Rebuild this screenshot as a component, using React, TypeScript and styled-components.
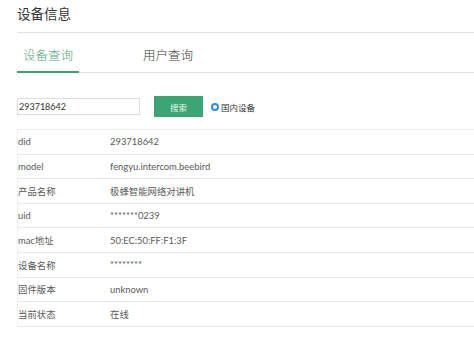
import styled, { createGlobalStyle } from 'styled-components'

const GlobalStyle = createGlobalStyle`
  html, body {
    margin: 0;
    padding: 0;
    background: #fff;
    overflow: hidden;
  }
  * { box-sizing: border-box; }
`

const Page = styled.div`
  padding-left: 17px;
  width: 100%;
  font-family: Lato, "Noto Sans CJK SC", sans-serif;
  color: #555;
`

const Header = styled.div`
  height: 33px;
  display: flex;
  align-items: center;
  padding-bottom: 6px;
  border-bottom: 1px solid #e3e3e3;
`

const Title = styled.h1`
  margin: 0;
  font-size: 13.5px;
  font-weight: 400;
  color: #333;
  font-family: "Noto Sans CJK SC", sans-serif;
`

const TabBar = styled.div`
  display: flex;
  height: 40px;
  gap: 58px;
  border-bottom: 1px solid #e3e3e3;
`

const Tab = styled.div<{ $active?: boolean }>`
  width: 62px;
  display: flex;
  align-items: center;
  justify-content: center;
  padding-top: 5px;
  font-size: 12.5px;
  font-weight: 300;
  font-family: "Noto Sans CJK SC", sans-serif;
  color: ${({ $active }) => ($active ? '#4fa57c' : '#3a3a3a')};
  border-bottom: 2px solid ${({ $active }) => ($active ? '#3d9e6e' : 'transparent')};
  margin-bottom: -1px;
`

const SearchRow = styled.div`
  display: flex;
  align-items: center;
  height: 56px;
  padding-top: 11px;
`

const Input = styled.input`
  width: 123px;
  height: 17px;
  border: 1px solid #ddd;
  padding: 0 1px;
  font-family: Lato, sans-serif;
  font-size: 9px;
  color: #333;
  outline: none;
`

const SearchButton = styled.button`
  margin-left: 14px;
  width: 49px;
  height: 21px;
  border: none;
  background: #3ba574;
  color: #e6f5ec;
  font-family: "Noto Sans CJK SC", sans-serif;
  font-size: 8.5px;
  padding: 0;
`

const RadioLabel = styled.label`
  margin-left: 8px;
  display: flex;
  align-items: center;
  gap: 2px;
  font-family: "Noto Sans CJK SC", sans-serif;
  font-size: 8.5px;
  color: #333;
`

const RadioDot = styled.span`
  width: 8px;
  height: 8px;
  border-radius: 50%;
  background: #fff;
  border: 2.5px solid #2d8cf0;
`

const Table = styled.div`
  border-top: 1px solid #eee;
  border-left: 1px solid #f2f2f2;
`

const Row = styled.div`
  display: grid;
  grid-template-columns: 92px 1fr;
  align-items: center;
  height: 24.6px;
  border-bottom: 1px solid #e8e8e8;
  font-size: 9.4px;
  color: #5a5a5a;
`

const Cell = styled.div`
  white-space: nowrap;
`

const rows: [string, string][] = [
  ['did', '293718642'],
  ['model', 'fengyu.intercom.beebird'],
  ['产品名称', '极蜂智能网络对讲机'],
  ['uid', '*******0239'],
  ['mac地址', '50:EC:50:FF:F1:3F'],
  ['设备名称', '********'],
  ['固件版本', 'unknown'],
  ['当前状态', '在线'],
]

export default function App() {
  return (
    <>
      <GlobalStyle />
      <Page>
        <Header>
          <Title>设备信息</Title>
        </Header>
        <TabBar>
          <Tab $active>设备查询</Tab>
          <Tab>用户查询</Tab>
        </TabBar>
        <SearchRow>
          <Input defaultValue="293718642" />
          <SearchButton>搜索</SearchButton>
          <RadioLabel>
            <RadioDot />
            国内设备
          </RadioLabel>
        </SearchRow>
        <Table>
          {rows.map(([k, v]) => (
            <Row key={k}>
              <Cell>{k}</Cell>
              <Cell>{v}</Cell>
            </Row>
          ))}
        </Table>
      </Page>
    </>
  )
}
